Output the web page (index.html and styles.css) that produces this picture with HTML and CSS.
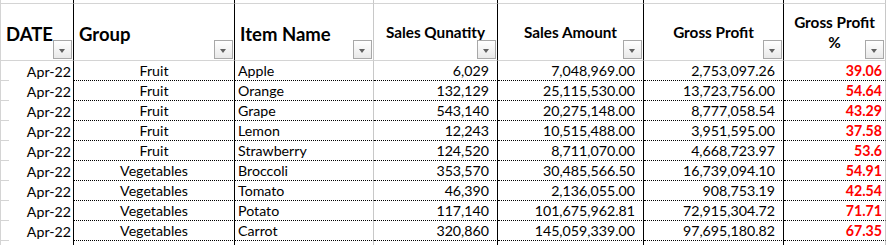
FILE: index.html
```html
<!DOCTYPE html>
<html lang="en">
<head>
<meta charset="utf-8">
<title>Sales sheet</title>
<link rel="stylesheet" href="styles.css">
</head>
<body>
<div class="sheet">
  <div class="row stub">
    <div class="cell c1"></div><div class="cell c2"></div><div class="cell c3"></div><div class="cell c4"></div><div class="cell c5"></div><div class="cell c6"></div><div class="cell c7"></div>
  </div>
  <div class="row head">
    <div class="cell c1 big"><span>DATE</span><i class="filter"></i></div>
    <div class="cell c2 big"><span>Group</span><i class="filter"></i></div>
    <div class="cell c3 big"><span>Item Name</span><i class="filter"></i></div>
    <div class="cell c4 small"><span>Sales Qunatity</span><i class="filter"></i></div>
    <div class="cell c5 small"><span>Sales Amount</span><i class="filter"></i></div>
    <div class="cell c6 small"><span>Gross Profit</span><i class="filter"></i></div>
    <div class="cell c7 small wrap"><span>Gross Profit<br>%</span><i class="filter"></i></div>
  </div>
  <div class="row data"><div class="cell c1">Apr-22</div><div class="cell c2">Fruit</div><div class="cell c3">Apple</div><div class="cell c4">6,029</div><div class="cell c5">7,048,969.00</div><div class="cell c6">2,753,097.26</div><div class="cell c7">39.06</div></div>
  <div class="row data"><div class="cell c1">Apr-22</div><div class="cell c2">Fruit</div><div class="cell c3">Orange</div><div class="cell c4">132,129</div><div class="cell c5">25,115,530.00</div><div class="cell c6">13,723,756.00</div><div class="cell c7">54.64</div></div>
  <div class="row data"><div class="cell c1">Apr-22</div><div class="cell c2">Fruit</div><div class="cell c3">Grape</div><div class="cell c4">543,140</div><div class="cell c5">20,275,148.00</div><div class="cell c6">8,777,058.54</div><div class="cell c7">43.29</div></div>
  <div class="row data"><div class="cell c1">Apr-22</div><div class="cell c2">Fruit</div><div class="cell c3">Lemon</div><div class="cell c4">12,243</div><div class="cell c5">10,515,488.00</div><div class="cell c6">3,951,595.00</div><div class="cell c7">37.58</div></div>
  <div class="row data"><div class="cell c1">Apr-22</div><div class="cell c2">Fruit</div><div class="cell c3">Strawberry</div><div class="cell c4">124,520</div><div class="cell c5">8,711,070.00</div><div class="cell c6">4,668,723.97</div><div class="cell c7">53.6</div></div>
  <div class="row data"><div class="cell c1">Apr-22</div><div class="cell c2">Vegetables</div><div class="cell c3">Broccoli</div><div class="cell c4">353,570</div><div class="cell c5">30,485,566.50</div><div class="cell c6">16,739,094.10</div><div class="cell c7">54.91</div></div>
  <div class="row data"><div class="cell c1">Apr-22</div><div class="cell c2">Vegetables</div><div class="cell c3">Tomato</div><div class="cell c4">46,390</div><div class="cell c5">2,136,055.00</div><div class="cell c6">908,753.19</div><div class="cell c7">42.54</div></div>
  <div class="row data"><div class="cell c1">Apr-22</div><div class="cell c2">Vegetables</div><div class="cell c3">Potato</div><div class="cell c4">117,140</div><div class="cell c5">101,675,962.81</div><div class="cell c6">72,915,304.72</div><div class="cell c7">71.71</div></div>
  <div class="row data"><div class="cell c1">Apr-22</div><div class="cell c2">Vegetables</div><div class="cell c3">Carrot</div><div class="cell c4">320,860</div><div class="cell c5">145,059,339.00</div><div class="cell c6">97,695,180.82</div><div class="cell c7">67.35</div></div>
  <div class="row tail">
    <div class="cell c1"></div><div class="cell c2"></div><div class="cell c3"></div><div class="cell c4"></div><div class="cell c5"></div><div class="cell c6"></div><div class="cell c7"></div>
  </div>
</div>
</body>
</html>
```

FILE: styles.css
```css
html, body {
  margin: 0;
  padding: 0;
  background: #ffffff;
}

body {
  font-family: Lato, "Liberation Sans", sans-serif;
  color: #000000;
  overflow: hidden;
}

.sheet {
  width: 886px;
  box-sizing: border-box;
  border-left: 1px solid #d4d4d4;
}

.row {
  display: grid;
  grid-template-columns: 73px 161px 139px 124px 146px 140px 102px;
}

.cell {
  box-sizing: border-box;
  border-right: 1px solid #000000;
  display: flex;
  min-width: 0;
  white-space: nowrap;
}

.c3, .c7 {
  border-right-color: #c8c8c8;
}

/* top partial row */
.stub .cell {
  height: 3px;
}

/* header */
.head .cell {
  height: 58px;
  border-top: 1px solid #d4d4d4;
  border-bottom: 1px solid #d4d4d4;
  position: relative;
  align-items: center;
  font-weight: 700;
}

.head .big {
  font-size: 18.5px;
  padding: 3px 0 0 5px;
}

.head .small {
  font-size: 15.3px;
  justify-content: center;
  text-align: center;
  padding-bottom: 1px;
}

.head .wrap span {
  line-height: 20px;
}

.filter {
  position: absolute;
  right: 1px;
  bottom: 1px;
  width: 19px;
  height: 19px;
  box-sizing: border-box;
  border: 1px solid #a8a8a8;
  background: linear-gradient(#ffffff, #e9e9e9);
}

.filter::after {
  content: "";
  position: absolute;
  left: 5px;
  top: 8px;
  border-left: 3.5px solid transparent;
  border-right: 3.5px solid transparent;
  border-top: 4px solid #606060;
}

/* data rows */
.data .cell {
  height: 20px;
  font-size: 14.2px;
  line-height: 16px;
  align-items: flex-end;
  padding-bottom: 1px;
  border-bottom: 1px dotted #000000;
}

.data .c1 {
  border-bottom: none;
  justify-content: flex-end;
  padding-right: 2px;
  background: linear-gradient(#d4d4d4, #d4d4d4) no-repeat left bottom / 8px 1px;
}

.data .c2 {
  justify-content: center;
}

.data .c3 {
  padding-left: 3px;
}

.data .c4, .data .c5, .data .c6 {
  justify-content: flex-end;
  padding-right: 8px;
}

.data .c7 {
  justify-content: flex-end;
  padding-right: 3px;
  color: #ff0000;
  font-weight: 700;
}

.tail .cell {
  height: 6px;
}
```
